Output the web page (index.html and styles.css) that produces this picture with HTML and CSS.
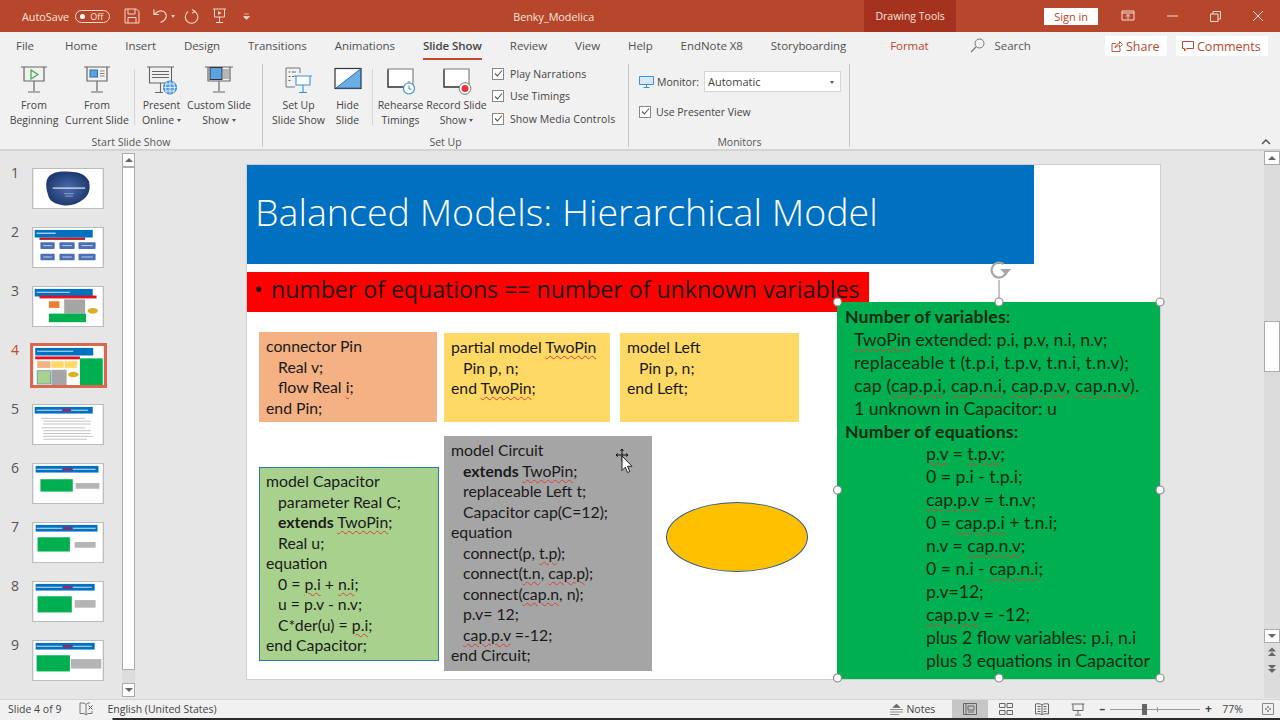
FILE: index.html
```html
<!DOCTYPE html>
<html lang="en">
<head>
<meta charset="utf-8">
<title>Benky_Modelica</title>
<link rel="stylesheet" href="styles.css">
</head>
<body>
<div class="app">
  <header class="titlebar">
    <span class="autosave">AutoSave</span>
    <span class="toggle"><i class="dot"></i>Off</span>
    <svg class="qa qa-save" width="16" height="16" viewBox="0 0 16 16"><path d="M1 1h11.500L15 3.500V15H1zM4 1v5h7V1M4 15V9.500h8V15" fill="none" stroke="#f3d6cc" stroke-width="1"/></svg>
    <svg class="qa qa-undo" width="15" height="16" viewBox="0 0 15 16"><path d="M1 1.500v5h5M1.500 6.500C4 3.500 6.500 2.500 9 3c3.500.8 5 4 4 6.500-.7 2-2.500 3.800-5.500 5" fill="none" stroke="#f3d6cc" stroke-width="1.200"/></svg>
    <i class="caret light qa-caret"></i>
    <svg class="qa qa-redo" width="16" height="16" viewBox="0 0 16 16"><path d="M8 1.500l3 1.800-2.800 2M10 3.200A6.300 6.300 0 1 1 4 3.800" fill="none" stroke="#f3d6cc" stroke-width="1.100"/></svg>
    <svg class="qa qa-show" width="15" height="16" viewBox="0 0 15 16"><path d="M1 1h13M2.500 1v8h10V1M7.500 9v5M4 14.500h7" fill="none" stroke="#f3d6cc"/><path d="M6 3l3.500 2L6 7z" fill="#f3d6cc"/></svg>
    <svg class="qa qa-more" width="7" height="7" viewBox="0 0 7 7"><path d="M1 1h5M.5 3.500h6L3.500 6.500z" fill="#f3d6cc" stroke="#f3d6cc" stroke-width=".7"/></svg>
    <span class="doc-title">Benky_Modelica</span>
    <span class="context-tab">Drawing Tools</span>
    <span class="signin">Sign in</span>
    <svg class="win win-opt" width="14" height="12" viewBox="0 0 14 12"><path d="M1 1h12v9H1zM1 3h12M7 9V4.500M5 6.500l2-2 2 2" fill="none" stroke="#f6e0d8"/></svg>
    <svg class="win win-min" width="11" height="2" viewBox="0 0 11 2"><path d="M0 1h11" stroke="#f6e0d8"/></svg>
    <svg class="win win-max" width="11" height="11" viewBox="0 0 11 11"><path d="M.5 3h7.500v7.500H.5zM3 3V.5h7.500V8H8" fill="none" stroke="#f6e0d8"/></svg>
    <svg class="win win-close" width="12" height="12" viewBox="0 0 12 12"><path d="M1 1l10 10M11 1L1 11" stroke="#f6e0d8"/></svg>
  </header>

  <nav class="tabs">
    <span class="tab t-file">File</span>
    <span class="tab">Home</span>
    <span class="tab">Insert</span>
    <span class="tab">Design</span>
    <span class="tab">Transitions</span>
    <span class="tab">Animations</span>
    <span class="tab active">Slide Show</span>
    <span class="tab">Review</span>
    <span class="tab">View</span>
    <span class="tab">Help</span>
    <span class="tab">EndNote X8</span>
    <span class="tab">Storyboarding</span>
    <span class="tab format">Format</span>
    <span class="search">
      <svg width="15" height="15" viewBox="0 0 15 15"><circle cx="9.500" cy="5.500" r="4.500" fill="none" stroke="#777"/><path d="M6 9l-5 5" stroke="#777" stroke-width="1.300"/></svg>
      Search
    </span>
    <span class="pill share">
      <svg width="12" height="12" viewBox="0 0 12 12"><path d="M5 3.500H1v8h8V8M4 8c.5-3 2.500-4.500 4.500-4.500V1.500L11.500 4.500 8.500 7.500V5.500C6.500 5.500 5 6.500 4 8z" fill="none" stroke="#b7472a" stroke-width=".9"/></svg>
      Share
    </span>
    <span class="pill comments">
      <svg width="12" height="11" viewBox="0 0 12 11"><path d="M.5.500h11v7H4.500L2.500 10V7.500h-2z" fill="none" stroke="#b7472a"/></svg>
      Comments
    </span>
  </nav>

  <section class="ribbon">
    <div class="group g-start">
      <div class="group-body">
        <div class="rbtn w62">
          <svg class="ricon" width="30" height="30" viewBox="0 0 30 30"><path d="M2 1.500h26M5 1.500v14h20v-14M15 15.500v10M9 26.500h12" fill="none" stroke="#666" stroke-width="1.200"/><path d="M12 4.500l7 4.500-7 4.500z" fill="#e8f5e8" stroke="#3fa34d" stroke-width="1.200"/></svg>
          <span>From<br>Beginning</span>
        </div>
        <div class="rbtn w64">
          <svg class="ricon" width="30" height="30" viewBox="0 0 30 30"><path d="M2 1.500h26M5 1.500v14h20v-14M15 15.500v10M9 26.500h12" fill="none" stroke="#666" stroke-width="1.200"/><rect x="8" y="4.500" width="7.500" height="7" fill="#5ba3e0" stroke="#2f6ea5"/><path d="M18 5.500h4.500M18 8h4.500M18 10.500h4.500" stroke="#888"/></svg>
          <span>From<br>Current Slide</span>
        </div>
        <i class="sep"></i>
        <div class="rbtn w49">
          <svg class="ricon" width="32" height="30" viewBox="0 0 32 30"><path d="M1 1.500h27M3.500 1.500v16h22v-16M6 6h17M6 9h17M6 12h17M14.500 17.500v9M9 27h8" fill="none" stroke="#666" stroke-width="1.100"/><circle cx="24" cy="22" r="6.500" fill="#5ba3e0" stroke="#2f7fc4"/><path d="M17.500 22h13M24 15.500v13M19 18.500h10M19 25.500h10M21 16.500c-2 3.500-2 7.500 0 11M27 16.500c2 3.500 2 7.500 0 11" fill="none" stroke="#fff" stroke-width=".7"/></svg>
          <span>Present<br>Online<i class="caret"></i></span>
        </div>
        <div class="rbtn w66">
          <svg class="ricon" width="30" height="30" viewBox="0 0 30 30"><path d="M1 1.500h28M4 1.500v14h22v-14M15 15.500v10M9 26.500h12" fill="none" stroke="#666" stroke-width="1.200"/><rect x="6" y="2" width="12" height="12" fill="#5ba3e0" stroke="#333"/><rect x="19" y="3.500" width="6" height="10" fill="#b5b5b5"/></svg>
          <span>Custom Slide<br>Show<i class="caret"></i></span>
        </div>
      </div>
      <div class="group-label">Start Slide Show</div>
    </div>
    <i class="gsep"></i>
    <div class="group g-setup">
      <div class="group-body">
        <div class="rbtn w59">
          <svg class="ricon" width="28" height="30" viewBox="0 0 28 30"><path d="M1 2.500h14v5M1 2.500v19h9" fill="none" stroke="#777"/><path d="M3.500 6.500h2M7 6.500h4M3.500 11h2M7 11h2M3.500 15h2" stroke="#666"/><path d="M9 10.500h18M11 10.500v9h14v-9M18 19.500v7M14 27h8" fill="#fff" stroke="#3d8fd1" stroke-width="1.100"/></svg>
          <span>Set Up<br>Slide Show</span>
        </div>
        <div class="rbtn w39">
          <svg class="ricon" width="28" height="30" viewBox="0 0 28 30"><rect x="1" y="3" width="26" height="20" fill="#fff" stroke="#333" stroke-width="1.200"/><path d="M2 22.500L26.500 3.500v19z" fill="#6caee4" stroke="#2f6ea5"/></svg>
          <span>Hide<br>Slide</span>
        </div>
        <i class="sep"></i>
        <div class="rbtn w52">
          <svg class="ricon" width="30" height="30" viewBox="0 0 30 30"><path d="M2 3.500h25v18H2z" fill="#fff" stroke="#777" stroke-width="1.100"/><path d="M2 4v17.500h16" fill="none" stroke="#444" stroke-width="1.300"/><circle cx="23" cy="23" r="5.500" fill="#fff" stroke="#3d8fd1" stroke-width="1.200"/><path d="M23 20v3.500h2.500M21.500 16.500h3" fill="none" stroke="#3d8fd1"/></svg>
          <span>Rehearse<br>Timings</span>
        </div>
        <div class="rbtn w61">
          <svg class="ricon" width="30" height="30" viewBox="0 0 30 30"><path d="M2 3.500h25v18H2z" fill="#fff" stroke="#777" stroke-width="1.100"/><path d="M2 4v17.500h16" fill="none" stroke="#444" stroke-width="1.300"/><circle cx="23" cy="23" r="5.800" fill="#fff" stroke="#777"/><circle cx="23" cy="23" r="3.500" fill="#e8323c"/></svg>
          <span>Record Slide<br>Show<i class="caret"></i></span>
        </div>
        <div class="checks">
          <label class="chk"><i class="cbx"><svg width="11" height="11" viewBox="0 0 11 11"><path d="M2 5.500l2.500 2.500L9 2.500" fill="none" stroke="#555" stroke-width="1.100"/></svg></i>Play Narrations</label>
          <label class="chk"><i class="cbx"><svg width="11" height="11" viewBox="0 0 11 11"><path d="M2 5.500l2.500 2.500L9 2.500" fill="none" stroke="#555" stroke-width="1.100"/></svg></i>Use Timings</label>
          <label class="chk"><i class="cbx"><svg width="11" height="11" viewBox="0 0 11 11"><path d="M2 5.500l2.500 2.500L9 2.500" fill="none" stroke="#555" stroke-width="1.100"/></svg></i>Show Media Controls</label>
        </div>
      </div>
      <div class="group-label">Set Up</div>
    </div>
    <i class="gsep"></i>
    <div class="group g-mon">
      <div class="group-body mon">
        <div class="mon-row">
          <svg width="15" height="12" viewBox="0 0 15 12"><path d="M.5.500h14v8H.5z" fill="#d5e9f8" stroke="#3d8fd1"/><path d="M7.500 8.500v2.500M4.500 11.500h6" stroke="#3d8fd1"/></svg>
          <span class="mon-label">Monitor:</span>
          <span class="select">Automatic<i class="caret"></i></span>
        </div>
        <label class="chk mon-chk"><i class="cbx"><svg width="11" height="11" viewBox="0 0 11 11"><path d="M2 5.500l2.500 2.500L9 2.500" fill="none" stroke="#555" stroke-width="1.100"/></svg></i>Use Presenter View</label>
      </div>
      <div class="group-label">Monitors</div>
    </div>
    <i class="gsep"></i>
    <svg class="collapse" width="10" height="6" viewBox="0 0 10 6"><path d="M1 5l4-4 4 4" fill="none" stroke="#555" stroke-width="1.500"/></svg>
  </section>

  <main class="main">
    <aside class="pane">
      <ol class="thumbs">
        <li class="thumb-row"><span class="num">1</span>
          <svg class="thumb" viewBox="0 0 72 41"><defs><radialGradient id="blob"><stop offset="0" stop-color="#4a6cae"/><stop offset="1" stop-color="#1f3a70"/></radialGradient></defs><rect width="72" height="41" fill="#fff"/><path d="M15 9c4-6 14-7 23-6 9 0 17 3 20 10 2 8 0 15-6 19-6 5-14 7-21 6-8-1-15-4-16-11-2-6-3-13 0-18z" fill="url(#blob)"/><path d="M20 20h34" stroke="#dfe5f0" stroke-width="1.300"/><path d="M32 26h10M33 28.500h8" stroke="#aeb9d3" stroke-width=".8"/></svg></li>
        <li class="thumb-row"><span class="num">2</span>
          <svg class="thumb" viewBox="0 0 72 41"><rect width="72" height="41" fill="#fff"/><rect x="1" y="2" width="61" height="8" fill="#0070c0"/><path d="M3 5.500h20" stroke="#cfe4f5" stroke-width="1.200"/><rect x="6" y="10" width="48" height="2.500" fill="#b01c2e"/><g fill="#4a6fb5"><rect x="7" y="15" width="15" height="7" rx="1"/><rect x="27" y="15" width="16" height="7" rx="1"/><rect x="47" y="15" width="18" height="7" rx="1"/><rect x="7" y="27" width="15" height="7" rx="1"/><rect x="27" y="27" width="16" height="7" rx="1"/><rect x="47" y="27" width="18" height="7" rx="1"/></g><path d="M10 18.500h9M30 18.500h10M50 18.500h12M10 30.500h9M30 30.500h10M50 30.500h12" stroke="#c6d3ea"/></svg></li>
        <li class="thumb-row"><span class="num">3</span>
          <svg class="thumb" viewBox="0 0 72 41"><rect width="72" height="41" fill="#fff"/><rect x="1" y="2" width="61" height="8" fill="#0070c0"/><path d="M3 5.500h35" stroke="#cfe4f5" stroke-width="1.200"/><rect x="6" y="9" width="60" height="3" fill="#e01020"/><rect x="16" y="15" width="11" height="7" fill="#ed7d31"/><rect x="32" y="13" width="22" height="15" fill="#a5a5a5"/><ellipse cx="62" cy="25" rx="5.500" ry="3" fill="#d9b020"/><rect x="16" y="28" width="39" height="9" fill="#00b050"/></svg></li>
        <li class="thumb-row current"><span class="num">4</span>
          <svg class="thumb" viewBox="0 0 72 41"><rect width="72" height="41" fill="#fff"/><rect x="1" y="2" width="61" height="8" fill="#0070c0"/><path d="M3 5.500h38" stroke="#cfe4f5" stroke-width="1.200"/><rect x="1" y="11" width="47" height="3" fill="#e01020"/><rect x="3" y="16" width="14" height="7" fill="#f4b183"/><rect x="18" y="16" width="13" height="7" fill="#ffd966"/><rect x="32" y="16" width="13" height="7" fill="#ffd966"/><rect x="3" y="26" width="14" height="14" fill="#a9d18e" stroke="#2e75b6" stroke-width=".6"/><rect x="18" y="25" width="16" height="16" fill="#a5a5a5"/><ellipse cx="41" cy="30" rx="5.500" ry="2.800" fill="#d9b020"/><rect x="48" y="13" width="24" height="28" fill="#00b050"/></svg></li>
        <li class="thumb-row"><span class="num">5</span>
          <svg class="thumb" viewBox="0 0 72 41"><rect width="72" height="41" fill="#fff"/><rect x="1" y="2" width="61" height="7" fill="#0070c0"/><path d="M3 5.500h27M39 5.500h18" stroke="#cfe4f5" stroke-width="1.200"/><rect x="30" y="4" width="9" height="3" fill="#8b2a6e"/><path d="M8 14h46M10 17h50M10 20h50M8 24h46M10 27h50M10 30h50M10 33h52M10 36h46" stroke="#c0c0c0"/></svg></li>
        <li class="thumb-row"><span class="num">6</span>
          <svg class="thumb" viewBox="0 0 72 41"><rect width="72" height="41" fill="#fff"/><rect x="2" y="2" width="66" height="7" fill="#0070c0"/><path d="M3 5.500h27M41 5.500h24" stroke="#cfe4f5" stroke-width="1.200"/><rect x="31" y="4" width="9" height="3" fill="#8b2a6e"/><rect x="7" y="16" width="34" height="13" fill="#00b050"/><rect x="44" y="20" width="25" height="6" fill="#b5b5b5"/></svg></li>
        <li class="thumb-row"><span class="num">7</span>
          <svg class="thumb" viewBox="0 0 72 41"><rect width="72" height="41" fill="#fff"/><rect x="2" y="2" width="65" height="7" fill="#0070c0"/><path d="M3 5.500h27M41 5.500h24" stroke="#cfe4f5" stroke-width="1.200"/><rect x="31" y="4" width="9" height="3" fill="#8b2a6e"/><rect x="4" y="15" width="34" height="15" fill="#00b050"/><rect x="43" y="20" width="22" height="6" fill="#b5b5b5"/></svg></li>
        <li class="thumb-row"><span class="num">8</span>
          <svg class="thumb" viewBox="0 0 72 41"><rect width="72" height="41" fill="#fff"/><rect x="2" y="2" width="62" height="7" fill="#0070c0"/><path d="M3 5.500h27M41 5.500h20" stroke="#cfe4f5" stroke-width="1.200"/><rect x="31" y="4" width="9" height="3" fill="#8b2a6e"/><rect x="4" y="15" width="36" height="17" fill="#00b050"/><rect x="43" y="19" width="22" height="8" fill="#b5b5b5"/></svg></li>
        <li class="thumb-row"><span class="num">9</span>
          <svg class="thumb" viewBox="0 0 72 41"><rect width="72" height="41" fill="#fff"/><rect x="2" y="2" width="62" height="7" fill="#0070c0"/><path d="M3 5.500h27M41 5.500h20" stroke="#cfe4f5" stroke-width="1.200"/><rect x="31" y="4" width="9" height="3" fill="#8b2a6e"/><rect x="3" y="15" width="35" height="17" fill="#00b050"/><rect x="39" y="19" width="32" height="10" fill="#b5b5b5"/></svg></li>
      </ol>
      <div class="vscroll small">
        <span class="sbtn"><i class="up"></i></span>
        <span class="sthumb long"></span>
        <span class="strack"></span>
        <span class="sbtn"><i class="down"></i></span>
      </div>
    </aside>

    <div class="stage">
      <div class="slide">
        <div class="s-title">Balanced Models: Hierarchical Model</div>
        <div class="s-sub"><span class="bullet">•</span>number of equations == number of unknown variables</div>

        <div class="box code b-pin">
          <p>connector Pin</p><p class="in">Real v;</p><p class="in">flow Real <u>i</u>;</p><p>end Pin;</p>
        </div>
        <div class="box code b-twopin">
          <p>partial model <u>TwoPin</u></p><p class="in">Pin p, n;</p><p>end <u>TwoPin</u>;</p>
        </div>
        <div class="box code b-left">
          <p>model Left</p><p class="in">Pin p, n;</p><p>end Left;</p>
        </div>
        <div class="box code b-cap">
          <p>model Capacitor</p><p class="in">parameter Real C;</p><p class="in"><b>extends</b> <u>TwoPin</u>;</p><p class="in">Real u;</p><p>equation</p><p class="in">0 = <u>p.i</u> + <u>n.i</u>;</p><p class="in">u = p.v - n.v;</p><p class="in">C*der(u) = <u>p.i</u>;</p><p>end Capacitor;</p>
        </div>
        <div class="box code b-circuit">
          <p>model Circuit</p><p class="in"><b>extends</b> <u>TwoPin</u>;</p><p class="in">replaceable Left t;</p><p class="in">Capacitor cap(C=12);</p><p>equation</p><p class="in">connect(p, <u>t.p</u>);</p><p class="in">connect(<u>t.n</u>, <u>cap.p</u>);</p><p class="in">connect(<u>cap.n</u>, n);</p><p class="in">p.v= 12;</p><p class="in"><u>cap.p.v</u> =-12;</p><p>end Circuit;</p>
        </div>
        <div class="ellipse"></div>

        <div class="box b-vars">
          <p><b>Number of variables:</b></p>
          <p class="in"><u>TwoPin</u> extended: p.i, p.v, n.i, n.v;</p>
          <p class="in wide">replaceable t (t.p.i, t.p.v, t.n.i, t.n.v);</p>
          <p class="in wide">cap (<u>cap.p.i</u>, <u>cap.n.i</u>, <u>cap.p.v</u>, <u>cap.n.v</u>).</p>
          <p class="in">1 unknown in Capacitor: u</p>
          <p><b>Number of equations:</b></p>
          <p class="eq"><u>p.v</u> = <u>t.p.v</u>;</p>
          <p class="eq">0 = p.i - t.p.i;</p>
          <p class="eq"><u>cap.p.v</u> = t.n.v;</p>
          <p class="eq">0 = <u>cap.p.i</u> + t.n.i;</p>
          <p class="eq">n.v = <u>cap.n.v</u>;</p>
          <p class="eq">0 = n.i - <u>cap.n.i</u>;</p>
          <p class="eq">p.v=12;</p>
          <p class="eq"><u>cap.p.v</u> = -12;</p>
          <p class="eq">plus 2 flow variables: p.i, n.i</p>
          <p class="eq">plus 3 equations in Capacitor</p>
        </div>

        <svg class="handles" width="340" height="250" viewBox="0 0 340 250">
          <path d="M170 31V53" stroke="#8c8c8c"/>
          <path d="M174.500 15a7.500 7.500 0 1 0 3 7" fill="none" stroke="#a6a6a6" stroke-width="2.200"/>
          <path d="M171 20h11l-5 6z" fill="#a6a6a6"/>
          <g fill="#fff" stroke="#8c8c8c" stroke-width="1.200">
            <circle cx="8.500" cy="53" r="4"/><circle cx="170" cy="53" r="4"/><circle cx="331" cy="53" r="4"/>
            <circle cx="8.500" cy="241" r="4"/><circle cx="331" cy="241" r="4"/>
          </g>
        </svg>
        <svg class="handles-bottom" width="340" height="12" viewBox="0 0 340 12">
          <g fill="#fff" stroke="#8c8c8c" stroke-width="1.200">
            <circle cx="8.500" cy="6" r="4"/><circle cx="170" cy="6" r="4"/><circle cx="331" cy="6" r="4"/>
          </g>
        </svg>
        <svg class="cursor" width="20" height="26" viewBox="0 0 20 26">
          <path d="M8 1v12M2 7h12M8 1L6.500 3M8 1l1.500 2M2 7l2-1.500M2 7l2 1.500M14 7l-2-1.500M14 7l-2 1.500" fill="none" stroke="#111" stroke-width="1"/>
          <path d="M8 8v14.500l3.300-3.300 2.300 5.300 2.200-1-2.300-5.200h4.500z" fill="#fff" stroke="#111" stroke-width=".9"/>
        </svg>
      </div>
    </div>

    <div class="vscroll big">
      <span class="sbtn"><i class="up"></i></span>
      <span class="strack t1"></span>
      <span class="sthumb"></span>
      <span class="strack"></span>
      <span class="sbtn"><i class="down"></i></span>
      <svg class="pager" width="8" height="26" viewBox="0 0 8 26"><path d="M0 4.500L4 .5l4 4zM0 9l4-4 4 4zM0 18l4 4 4-4zM0 22l4 4 4-4z" fill="#666"/></svg>
    </div>
  </main>

  <footer class="status">
    <span class="st-slide">Slide 4 of 9</span>
    <svg class="st-spell" width="15" height="14" viewBox="0 0 15 14"><path d="M1 1h4l2 1.500V13L5 11.500H1zM7 2.500L9 1h2M7 13l2-1.500h4V9" fill="none" stroke="#777"/><path d="M9.500 3.500l4 4M13.500 3.500l-4 4" stroke="#555"/></svg>
    <span class="st-lang">English (United States)</span>
    <span class="st-notes">
      <svg width="13" height="11" viewBox="0 0 13 11"><path d="M6.500 0L10 3.500H3zM0 5.500h13M0 8h13M0 10.500h9" fill="#666" stroke="#666" stroke-width=".7"/></svg>
      Notes
    </span>
    <span class="view on"><svg width="14" height="12" viewBox="0 0 14 12"><path d="M.5.500h13v11H.5zM3 .5v11M5 3h6v4H5zM5 9h6" fill="none" stroke="#666"/></svg></span>
    <span class="view"><svg width="14" height="12" viewBox="0 0 14 12"><path d="M.5.500h5.500v4H.5zM8 .5h5.500v4H8zM.5 7.500h5.500v4H.5zM8 7.500h5.500v4H8z" fill="none" stroke="#666"/></svg></span>
    <span class="view"><svg width="14" height="12" viewBox="0 0 14 12"><path d="M7 2c-2-1.500-4-1.500-6.500-1v10c2.500-.5 4.500-.5 6.500 1 2-1.500 4-1.500 6.500-1V1C11 .5 9 .5 7 2zM7 2v10M2.500 3.500h3M2.500 6h3M2.500 8.500h3M8.500 3.500h3M8.500 6h3M8.500 8.500h3" fill="none" stroke="#666"/></svg></span>
    <span class="view"><svg width="14" height="13" viewBox="0 0 14 13"><path d="M.5 1h13M2 1v6.500h10V1M7 7.500V11M4 12h6" fill="none" stroke="#666"/></svg></span>
    <span class="zoom">
      <span class="z-btn">–</span>
      <span class="z-track"><i class="z-tick"></i><i class="z-knob"></i></span>
      <span class="z-btn">+</span>
    </span>
    <span class="st-pct">77%</span>
    <svg class="st-fit" width="12" height="12" viewBox="0 0 12 12"><path d="M.5.500h11v11H.5z" fill="none" stroke="#888"/><path d="M3 6h2M7 6h2M6 3v2M6 7v2" stroke="#444"/></svg>
  </footer>
  <div class="edge"></div>
</div>
</body>
</html>
```

FILE: styles.css
```css
* { box-sizing: border-box; }
html, body { margin: 0; padding: 0; }
body { width: 1280px; height: 720px; overflow: hidden; font-family: "Open Sans", "Noto Sans", sans-serif; color: #444; }
p { margin: 0; }
i { font-style: normal; }
label { display: flex; }
svg { flex: none; }

.app { display: flex; flex-direction: column; width: 1280px; height: 720px; background: #e6e6e6; }

/* title bar */
.titlebar { display: flex; align-items: center; flex: 0 0 32px; height: 32px; background: #b7472a; color: #f8e4dc; font-size: 10.800px; }
.autosave { margin-left: 22px; }
.toggle { display: flex; align-items: center; margin-left: 6px; width: 35px; height: 13px; border: 1px solid #f3d6cc; border-radius: 7px; font-size: 9px; padding-left: 4px; gap: 5px; }
.dot { width: 5px; height: 5px; border-radius: 50%; background: #fff; }
.qa-save { margin-left: 14px; }
.qa-undo { margin-left: 13px; }
.qa-caret { margin-left: 2px; }
.qa-redo { margin-left: 9px; }
.qa-show { margin-left: 12px; }
.qa-more { margin-left: 16px; }
.doc-title { margin-left: 263px; font-size: 10.800px; }
.context-tab { display: flex; align-items: center; justify-content: center; width: 92px; height: 32px; margin-left: 270px; background: #a5321e; font-size: 10.500px; }
.signin { display: flex; align-items: center; justify-content: center; width: 54px; height: 17px; margin-left: 88px; background: #fff; color: #b7472a; font-size: 11px; }
.win-opt { margin-left: 23px; }
.win-min { margin-left: 32px; }
.win-max { margin-left: 32px; }
.win-close { margin-left: 31px; }

/* tabs */
.tabs { display: flex; align-items: center; flex: 0 0 30px; height: 30px; background: #f1f1f1; font-size: 11.500px; letter-spacing: -.05px; padding-left: 16px; }
.tab { position: relative; margin-right: 27.950px; line-height: 28px; margin-top: -2px; color: #505050; white-space: nowrap; }
.t-file { margin-right: 31px; }
.active { color: #444; font-weight: 600; }
.active::after { content: ""; position: absolute; left: 0; right: 0; bottom: 0; height: 2px; background: #c0492c; }
.format { color: #b7472a; margin-left: 16px; margin-right: 0; }
.search { display: flex; align-items: center; gap: 10px; margin-left: 41px; margin-top: -4px; color: #555; }
.pill { display: flex; align-items: center; gap: 3px; height: 20px; margin-top: -2px; background: #fff; color: #b7472a; font-size: 12.500px; letter-spacing: 0; padding: 0 6px; white-space: nowrap; }
.share { margin-left: auto; width: 62px; }
.comments { margin-left: 9px; width: 92px; margin-right: 12px; }

/* ribbon */
.ribbon { position: relative; display: flex; flex: 0 0 89px; height: 89px; background: #f1f1f1; border-bottom: 2px solid #d4d4d4; font-size: 10.500px; }
.group { display: flex; flex-direction: column; }
.group-body { display: flex; flex: 1; padding-top: 2px; }
.group-label { height: 14px; line-height: 14px; text-align: center; color: #555; font-size: 10.500px; }
.g-start { width: 262px; }
.g-start .group-body { padding-left: 3px; }
.g-setup { width: 365px; }
.g-setup .group-body { padding-left: 6px; }
.g-mon { width: 219px; }
.g-mon .group-body { padding-left: 9px; }
.gsep { flex: 0 0 1px; width: 1px; height: 83px; margin-top: 2px; background: #c6c6c6; }
.g-mon { margin-left: 1px; }
.sep { flex: 0 0 1px; width: 1px; height: 56px; margin: 5px 2px 0 5px; background: #d5d5d5; }
.rbtn { display: flex; flex-direction: column; align-items: center; text-align: center; line-height: 15px; color: #444; white-space: nowrap; }
.rbtn span { display: block; margin-top: 2px; }
.ricon { display: block; height: 32px; padding-top: 1px; }
.w62 { width: 62px; }
.w64 { width: 64px; }
.w49 { width: 49px; }
.w66 { width: 66px; }
.w59 { width: 59px; }
.w39 { width: 39px; }
.w52 { width: 51px; }
.w61 { width: 61px; }
.caret { display: inline-block; width: 0; height: 0; margin-left: 3px; vertical-align: 2px; border-left: 2.500px solid transparent; border-right: 2.500px solid transparent; border-top: 3px solid #555; }
.caret.light { border-top-color: #f3d6cc; }
.checks { display: flex; flex-direction: column; gap: 3.500px; margin-left: 5px; padding-top: 0; }
.chk { align-items: center; gap: 5px; height: 19px; white-space: nowrap; color: #444; }
.checks .chk { gap: 6px; letter-spacing: .08px; }
.cbx { display: flex; align-items: center; justify-content: center; width: 12px; height: 12px; background: #fff; border: 1px solid #888; }
.group-body.mon { flex-direction: column; padding-top: 9px; gap: 10px; }
.mon-row { display: flex; align-items: center; gap: 3px; height: 21px; }
.mon-label { color: #444; }
.select { position: relative; display: flex; align-items: center; width: 137px; height: 21px; margin-left: 2px; padding-left: 3px; background: #fff; border: 1px solid #d6d6d6; font-size: 11px; }
.select .caret { position: absolute; right: 6px; top: 9px; }
.collapse { position: absolute; right: 9px; top: 77px; }

/* main */
.main { display: flex; flex: 1; min-height: 0; }
.pane { display: flex; flex: 0 0 140px; width: 140px; }
.thumbs { flex: 1; margin: 0; padding: 17px 0 0; list-style: none; display: flex; flex-direction: column; gap: 18px; }
.thumb-row { position: relative; display: flex; height: 41px; padding-left: 32px; }
.num { position: absolute; left: 11px; top: -4px; font-size: 14px; line-height: 18px; color: #555; }
.thumb { display: block; width: 72px; height: 41px; border: 1px solid #bcbcbc; filter: blur(.4px); }
.current .num { color: #c0492c; }
.current .thumb { width: 77px; height: 45px; margin: -2px 0 0 -2px; border: 3px solid #d9694e; }

.vscroll { display: flex; flex-direction: column; position: relative; background: #dcdcdc; }
.vscroll.small { flex: 0 0 13px; width: 13px; margin: 2px 5px 1px 0; }
.vscroll.big { flex: 0 0 16px; width: 16px; }
.sbtn { display: flex; align-items: center; justify-content: center; height: 14px; background: #fff; border: 1px solid #ababab; flex: none; }
.up { width: 0; height: 0; border-left: 4px solid transparent; border-right: 4px solid transparent; border-bottom: 4px solid #666; }
.down { width: 0; height: 0; border-left: 4px solid transparent; border-right: 4px solid transparent; border-top: 4px solid #666; }
.sthumb { height: 51px; background: #fff; border: 1px solid #ababab; flex: none; }
.sthumb.long { height: 503px; }
.strack { flex: 1; }
.t1 { flex: 0 0 156px; }
.big .sbtn:last-of-type { margin-bottom: 55px; }
.pager { position: absolute; left: 4px; bottom: 25px; }

/* slide stage */
.stage { flex: 1; padding: 14px 0 0 107px; min-width: 0; }
.slide { position: relative; width: 913px; height: 514px; background: #fff; box-shadow: 0 0 0 1px #cfcfcf; font-family: Lato, "Open Sans", sans-serif; color: #1a1a1a; }
.slide u { text-decoration: underline wavy #d9403a; text-decoration-thickness: 1px; text-underline-offset: 2px; }
.s-title { position: absolute; left: 0; top: 0; width: 787px; height: 99px; padding: 20px 0 0 8px; background: #0070c0; color: #fff; font-family: "Open Sans", sans-serif; font-weight: 300; font-size: 37.600px; line-height: 54px; white-space: nowrap; }
.s-sub { position: absolute; left: 0; top: 107px; width: 622px; height: 40px; padding-left: 7px; background: #ff0000; color: #1a1a1a; font-family: "Open Sans", sans-serif; font-size: 23.100px; line-height: 35px; white-space: nowrap; }
.bullet { display: inline-block; width: 17px; }
.box { position: absolute; }
.code { font-size: 15.800px; line-height: 20.500px; padding: 4px 7px; white-space: nowrap; }
.in { padding-left: 12px; }
.b-pin { left: 12px; top: 167px; width: 178px; height: 90px; background: #f4b183; }
.b-twopin { left: 197px; top: 168px; width: 166px; height: 89px; background: #ffd966; }
.b-left { left: 373px; top: 168px; width: 179px; height: 89px; background: #ffd966; }
.b-cap { left: 12px; top: 302px; width: 180px; height: 194px; background: #a9d18e; border: 1px solid #2e75b6; padding: 3px 6px; }
.b-circuit { left: 197px; top: 271px; width: 208px; height: 235px; background: #a5a5a5; }
.ellipse { position: absolute; left: 419px; top: 337px; width: 142px; height: 70px; border-radius: 50%; background: #ffc000; border: 1px solid #2e5a8a; }
.b-vars { left: 590px; top: 137px; width: 323px; height: 377px; background: #00b050; font-size: 17.600px; line-height: 22.900px; padding: 4px 8px; white-space: nowrap; color: #0c2a14; }
.b-vars b { letter-spacing: .2px; }
.b-vars .in { padding-left: 9px; }
.b-vars .wide { letter-spacing: .25px; }
.b-vars .eq { padding-left: 81px; }
.handles { position: absolute; left: 582px; top: 84px; pointer-events: none; }
.handles-bottom { position: absolute; left: 582px; top: 507px; }
.cursor { position: absolute; left: 367px; top: 283px; }

/* status */
.status { display: flex; align-items: center; flex: 0 0 19px; height: 19px; background: #f1f1f1; border-top: 1px solid #d4d4d4; margin-top: 1px; font-size: 10.500px; color: #444; white-space: nowrap; }
.st-slide { margin-left: 8px; }
.st-spell { margin-left: 18px; }
.st-lang { margin-left: 13px; }
.st-notes { display: flex; align-items: center; gap: 3px; margin-left: auto; }
.view { display: flex; align-items: center; justify-content: center; width: 36px; height: 100%; }
.view.on { margin-left: 17px; background: #c6c6c6; }
.zoom { display: flex; align-items: center; gap: 4px; margin-left: 2px; }
.z-btn { width: 8px; text-align: center; font-size: 12px; font-weight: 700; line-height: 12px; }
.z-track { position: relative; display: block; width: 90px; height: 1px; background: #9a9a9a; }
.z-tick { position: absolute; left: 47px; top: -2px; width: 1px; height: 5px; background: #9a9a9a; }
.z-knob { position: absolute; left: 32px; top: -5px; width: 5px; height: 11px; background: #666; }
.st-pct { margin-left: 10px; }
.st-fit { margin-left: 19px; margin-right: 6px; }
.edge { flex: 0 0 2px; height: 2px; background: linear-gradient(90deg, #f1f1f1 112px, #2b2b2b 113px); }
```
